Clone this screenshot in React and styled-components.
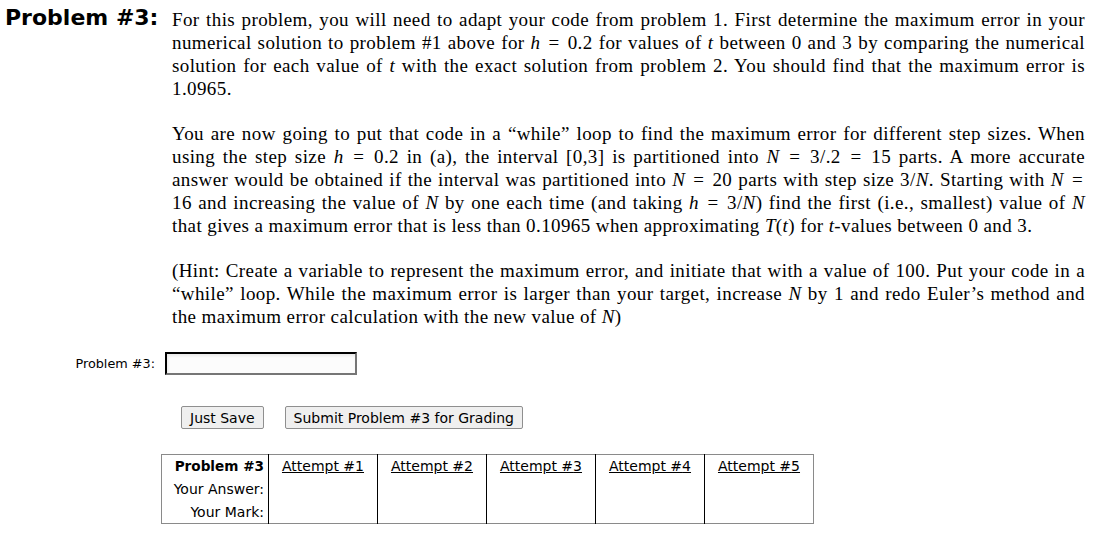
import React from 'react';
import styled, { createGlobalStyle } from 'styled-components';

const GlobalStyle = createGlobalStyle`
  body {
    margin: 0;
    background: #ffffff;
    color: #000000;
    font-family: "DejaVu Sans", Verdana, sans-serif;
  }
`;

const Page = styled.div`
  padding: 8px 11px 0 5px;
`;

const Section = styled.div`
  display: flex;
  align-items: flex-start;
`;

const Heading = styled.div`
  width: 167px;
  flex-shrink: 0;
  font-family: "DejaVu Sans", Verdana, sans-serif;
  font-weight: bold;
  font-size: 22px;
  line-height: 20px;
  white-space: nowrap;
`;

const Body = styled.div`
  flex: 1;
  font-family: "Liberation Serif", "Times New Roman", serif;
  font-size: 19px;
  letter-spacing: 0.4px;
  line-height: 23px;
`;

const Para = styled.div`
  margin: 0 0 22px 0;
`;

// one printed line of a paragraph, spread to the full width like the source
const Line = styled.span`
  display: block;
  text-align: justify;
  text-align-last: ${p => (p.$last ? 'left' : 'justify')};
`;

const I = styled.i`
  font-style: italic;
`;

const Eq = styled.span`
  margin: 0 2px;
`;

const FormRow = styled.div`
  display: flex;
  align-items: center;
  margin-top: 2px;
`;

const Label = styled.label`
  width: 150px;
  text-align: right;
  font-size: 12.8px;
  padding-right: 10px;
`;

const Input = styled.input`
  box-sizing: border-box;
  width: 192px;
  height: 23px;
  border: 2px inset #767676;
  border-top-color: #222;
  border-left-color: #222;
  box-shadow: inset 1px 2px 3px rgba(0, 0, 0, 0.08);
  background: #fcfcfc;
  margin: 0;
`;

const ButtonRow = styled.div`
  display: flex;
  gap: 21px;
  margin: 31px 0 0 176px;
`;

const Button = styled.button`
  box-sizing: border-box;
  height: 23px;
  padding: 0 8px;
  font-family: "DejaVu Sans", Verdana, sans-serif;
  font-size: 14px;
  color: #000;
  background: #efefef;
  border: 1px solid #8f8f8f;
  border-radius: 2px;
`;

const Table = styled.table`
  margin: 25px 0 0 156px;
  border-collapse: collapse;
  border: 1px solid #8a8a8a;
  font-size: 14px;
  table-layout: fixed;
  width: 652px;
`;

const Td = styled.td`
  height: 23px;
  padding: 0 4px;
  box-sizing: border-box;
  border-left: ${p => (p.$first ? 'none' : '1px solid #000')};
  text-align: ${p => (p.$first ? 'right' : 'center')};
  font-weight: ${p => (p.$bold ? 'bold' : 'normal')};
  font-size: ${p => (p.$bold ? '13.6px' : '14px')};
  width: ${p => (p.$first ? '107px' : '109px')};
  vertical-align: middle;
  white-space: nowrap;
`;

const AttemptLink = styled.a`
  color: #000;
  text-decoration: underline;
`;

const attempts = [1, 2, 3, 4, 5];

export default function App() {
  return (
    <Page>
      <GlobalStyle />
      <Section>
        <Heading>Problem #3:</Heading>
        <Body>
          <Para>
            <Line>For this problem, you will need to adapt your code from problem 1. First determine the maximum error in your</Line>
            <Line>numerical solution to problem #1 above for <I>h</I> <Eq>=</Eq> 0.2 for values of <I>t</I> between 0 and 3 by comparing the numerical</Line>
            <Line>solution for each value of <I>t</I> with the exact solution from problem 2. You should find that the maximum error is</Line>
            <Line $last>1.0965.</Line>
          </Para>
          <Para>
            <Line>You are now going to put that code in a “while” loop to find the maximum error for different step sizes. When</Line>
            <Line>using the step size <I>h</I> <Eq>=</Eq> 0.2 in (a), the interval [0,3] is partitioned into <I>N</I> <Eq>=</Eq> 3/.2 <Eq>=</Eq> 15 parts. A more accurate</Line>
            <Line>answer would be obtained if the interval was partitioned into <I>N</I> <Eq>=</Eq> 20 parts with step size 3/<I>N</I>. Starting with <I>N</I> <Eq>=</Eq></Line>
            <Line>16 and increasing the value of <I>N</I> by one each time (and taking <I>h</I> <Eq>=</Eq> 3/<I>N</I>) find the first (i.e., smallest) value of <I>N</I></Line>
            <Line $last>that gives a maximum error that is less than 0.10965 when approximating <I>T</I>(<I>t</I>) for <I>t</I>-values between 0 and 3.</Line>
          </Para>
          <Para>
            <Line>(Hint: Create a variable to represent the maximum error, and initiate that with a value of 100. Put your code in a</Line>
            <Line>“while” loop. While the maximum error is larger than your target, increase <I>N</I> by 1 and redo Euler’s method and</Line>
            <Line $last>the maximum error calculation with the new value of <I>N</I>)</Line>
          </Para>
        </Body>
      </Section>

      <FormRow>
        <Label>Problem #3:</Label>
        <Input type="text" />
      </FormRow>

      <ButtonRow>
        <Button>Just Save</Button>
        <Button>Submit Problem #3 for Grading</Button>
      </ButtonRow>

      <Table>
        <tbody>
          <tr>
            <Td $first $bold>Problem #3</Td>
            {attempts.map(n => (
              <Td key={n}><AttemptLink href="#">Attempt #{n}</AttemptLink></Td>
            ))}
          </tr>
          <tr>
            <Td $first>Your Answer:</Td>
            {attempts.map(n => <Td key={n} />)}
          </tr>
          <tr>
            <Td $first>Your Mark:</Td>
            {attempts.map(n => <Td key={n} />)}
          </tr>
        </tbody>
      </Table>
    </Page>
  );
}
